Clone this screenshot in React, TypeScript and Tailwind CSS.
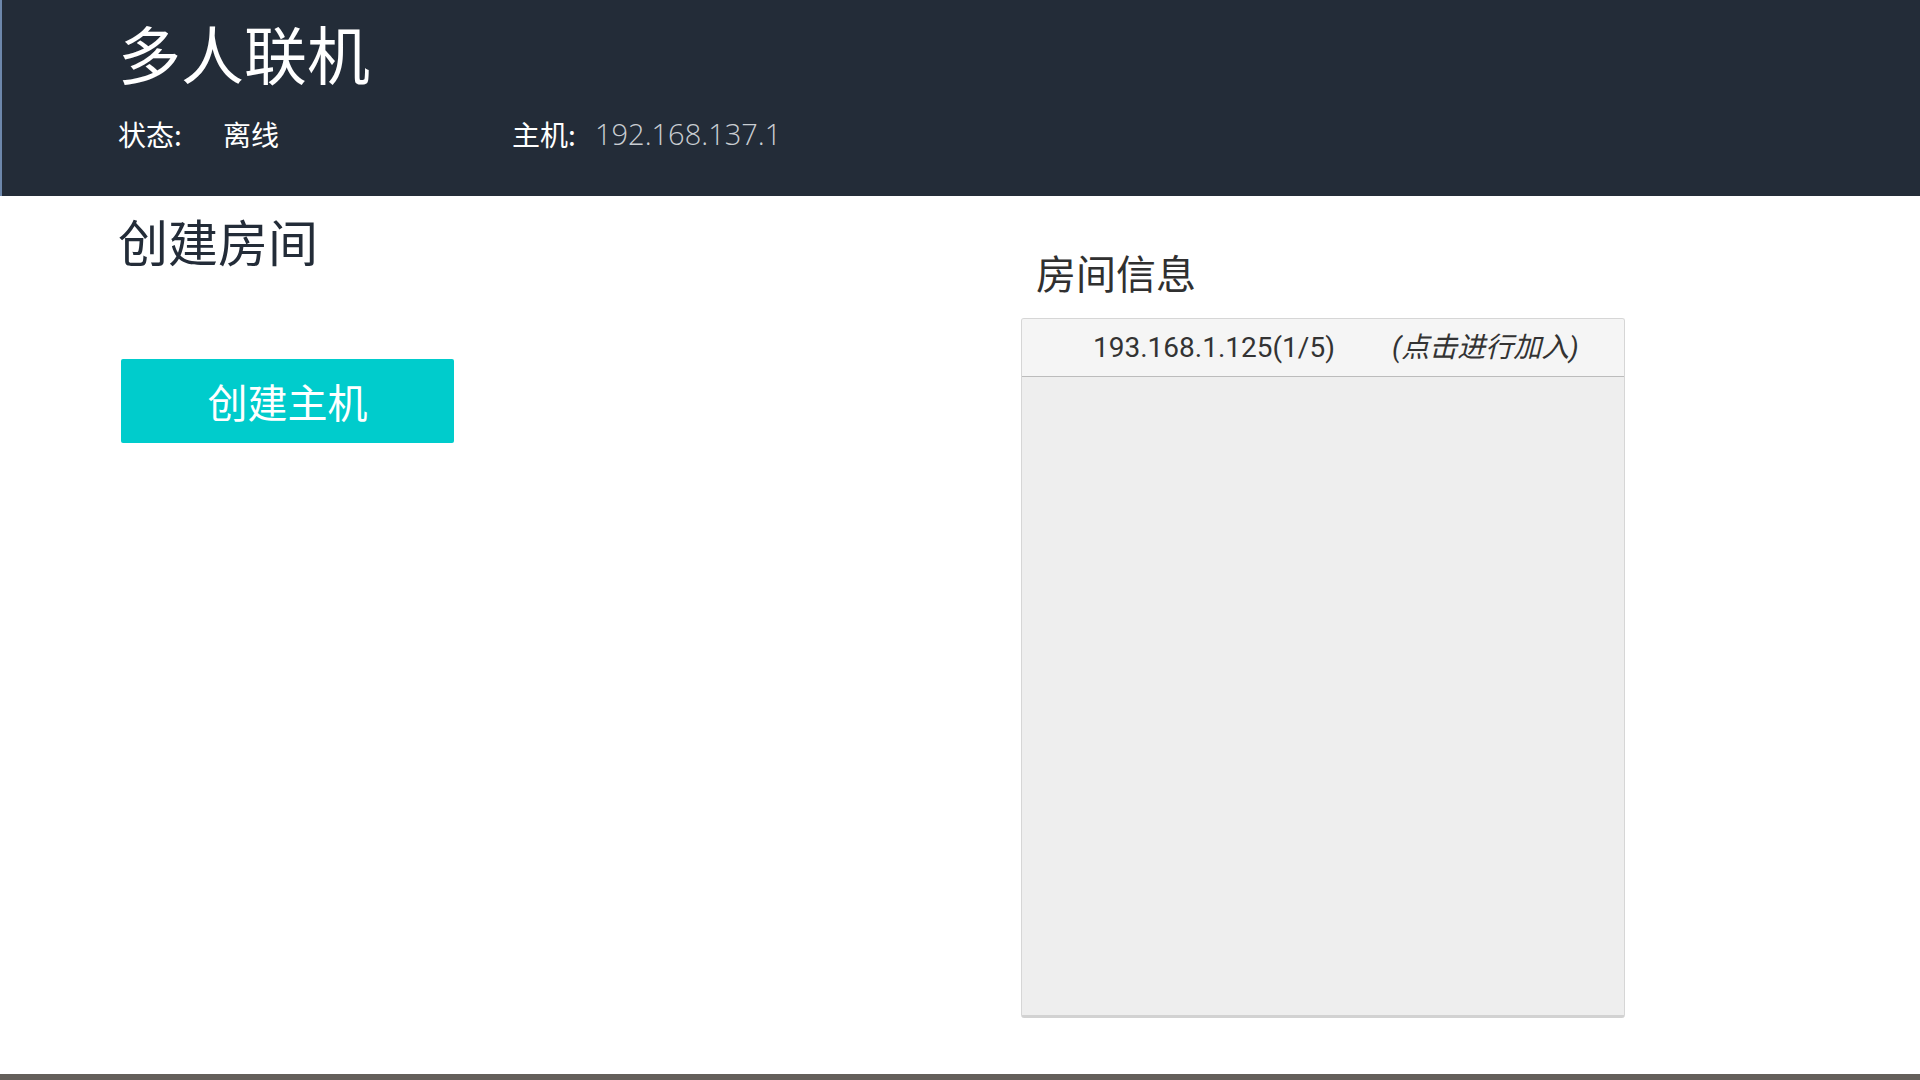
import React from 'react';

const cjk = "font-['Noto_Sans_CJK_SC',sans-serif]";

const rooms = [{ host: '193.168.1.125', players: '1/5' }];

const Header = () => {
  return (
    <header className="h-[196px] bg-[#232c38] border-l-[2px] border-[#6d87ab] pl-[116px] pt-[20px] text-white">
      <h1 className={`${cjk} text-[63px] leading-none font-normal`}>多人联机</h1>
      <div className={`${cjk} mt-[36px] flex items-center text-[28px] leading-none`}>
        <span className="w-[105px]">状态:</span>
        <span className="w-[289px]">离线</span>
        <span className="w-[83px]">主机:</span>
        <span className="font-['Open_Sans',sans-serif] font-light text-[#c9cdd2] text-[29px]">
          192.168.137.1
        </span>
      </div>
    </header>
  );
};

const RoomList = () => {
  return (
    <div className="mt-[26px] h-[700px] w-[604px] rounded-[3px] border border-[#d6d6d6] border-b-[3px] border-b-[#d2d2d2] bg-[#eeeeee] overflow-hidden">
      {rooms.map((room, idx) => (
        <button
          key={`room${idx}`}
          className="flex h-[58px] w-full items-center border-b border-[#bcbcbc] bg-[#f5f5f5] pl-[71px] text-[28px] leading-none text-[#333333] font-['Roboto','Noto_Sans_CJK_SC',sans-serif]"
        >
          <span>
            {room.host}({room.players})
          </span>
          <span className="ml-[57px] italic">(点击进行加入)</span>
        </button>
      ))}
    </div>
  );
};

const App = () => {
  return (
    <div className="relative h-[1080px] w-[1920px] overflow-hidden bg-white">
      <Header />
      <main className="flex">
        <section className="w-[1021px] pl-[118px] pt-[19px]">
          <h2 className={`${cjk} text-[50px] leading-none font-normal text-[#232c38]`}>创建房间</h2>
          <button
            className={`${cjk} ml-[3px] mt-[94px] flex h-[84px] w-[333px] items-center justify-center rounded-[2px] bg-[#00cccc] text-[40px] leading-none text-white`}
          >
            创建主机
          </button>
        </section>
        <section className="pt-[56px]">
          <h2 className={`${cjk} ml-[15px] text-[40px] leading-none font-normal text-[#303030]`}>房间信息</h2>
          <RoomList />
        </section>
      </main>
      <div className="absolute bottom-0 left-0 h-[6px] w-full bg-[#645f5a]" />
    </div>
  );
};

export default App;
